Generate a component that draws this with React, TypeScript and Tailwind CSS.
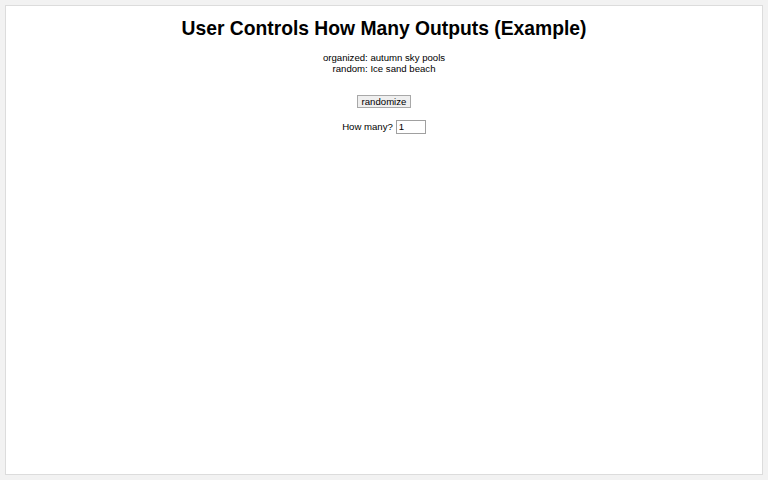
import React, { useState } from "react";

export default function App() {
  const [count, setCount] = useState("1");

  return (
    <div className="h-screen w-full bg-[#f2f2f2] p-[5px] font-['Liberation_Sans',Arial,sans-serif] text-black">
      <div className="h-full w-full border border-[#dcdcdc] bg-white flex flex-col items-center pt-[12px]">
        <h1 className="text-[19.3px] leading-[22px] font-bold">User Controls How Many Outputs (Example)</h1>

        <div className="mt-[12px] text-[9.6px] leading-[11px] text-center">
          <div>organized: autumn sky pools</div>
          <div>random: Ice sand beach</div>
        </div>

        <button className="mt-[21px] h-[13px] px-[4px] text-[9.6px] leading-[11px] bg-[#efefef] border border-[#a8a8a8]">
          randomize
        </button>

        <div className="mt-[12px] flex items-center text-[9.6px]">
          <span>How many?</span>
          <input
            value={count}
            onChange={(e) => setCount(e.target.value)}
            className="ml-[3px] w-[30px] h-[14px] px-[2px] text-[9.6px] border border-[#a0a0a0] outline-none"
          />
        </div>
      </div>
    </div>
  );
}
